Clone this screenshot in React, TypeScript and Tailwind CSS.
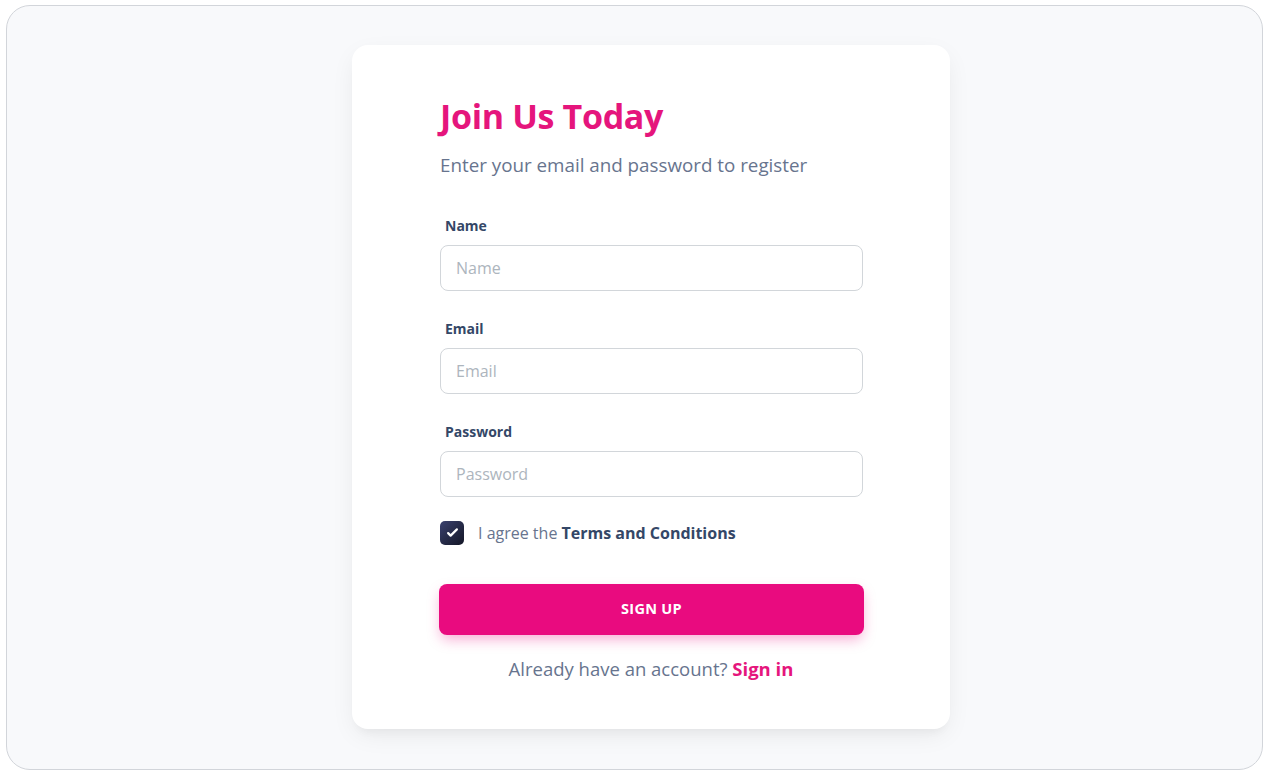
import React, { useState } from 'react';

export default function App() {
    const [agree, setAgree] = useState(true);

    return (
        <div className="min-h-screen w-full bg-white pl-[6px] pr-[8px] pt-[5px] font-['Open_Sans',sans-serif]">
            <div className="h-[765px] w-full rounded-[24px] border border-[#d2d5da] bg-[#f8f9fb] pl-[345px] pt-[39px]">
                {/* Card */}
                <div className="flex h-[684px] w-[598px] flex-col rounded-[16px] bg-white px-[88px] pt-[51px] shadow-[0_8px_26px_-4px_rgba(20,20,20,0.08),0_8px_9px_-5px_rgba(20,20,20,0.04)]">
                    <h1 className="text-[34px] font-bold leading-[1.2] tracking-[-0.01em] text-[#e5157c]">
                        Join Us Today
                    </h1>
                    <p className="mt-[15px] text-[18.8px] leading-[27px] text-[#67748e]">
                        Enter your email and password to register
                    </p>

                    <form className="mt-[37px] flex flex-col" onSubmit={(e) => e.preventDefault()}>
                        <label className="ml-[5px] text-[14px] font-bold leading-[20px] text-[#344767]">Name</label>
                        <input
                            type="text"
                            placeholder="Name"
                            className="mt-[9px] h-[46px] w-[423px] rounded-[8px] border border-[#d2d6da] bg-white px-[15px] text-[16px] text-[#495057] outline-none placeholder:text-[#adb5bd]"
                        />

                        <label className="ml-[5px] mt-[28px] text-[14px] font-bold leading-[20px] text-[#344767]">Email</label>
                        <input
                            type="email"
                            placeholder="Email"
                            className="mt-[9px] h-[46px] w-[423px] rounded-[8px] border border-[#d2d6da] bg-white px-[15px] text-[16px] text-[#495057] outline-none placeholder:text-[#adb5bd]"
                        />

                        <label className="ml-[5px] mt-[28px] text-[14px] font-bold leading-[20px] text-[#344767]">Password</label>
                        <input
                            type="password"
                            placeholder="Password"
                            className="mt-[9px] h-[46px] w-[423px] rounded-[8px] border border-[#d2d6da] bg-white px-[15px] text-[16px] text-[#495057] outline-none placeholder:text-[#adb5bd]"
                        />

                        {/* Terms */}
                        <label className="mt-[24px] flex cursor-pointer items-center gap-[14px]">
                            <span className="flex h-[24px] w-[24px] items-center justify-center rounded-[5px] bg-gradient-to-br from-[#3a416f] to-[#141727]">
                                {agree && (
                                    <svg className="h-[15px] w-[15px] text-white" fill="none" viewBox="0 0 24 24" stroke="currentColor">
                                        <path strokeLinecap="round" strokeLinejoin="round" strokeWidth={3.5} d="M5 13l4 4L19 7" />
                                    </svg>
                                )}
                            </span>
                            <input
                                type="checkbox"
                                className="hidden"
                                checked={agree}
                                onChange={(e) => setAgree(e.target.checked)}
                            />
                            <span className="text-[16px] leading-[24px] text-[#67748e]">
                                I agree the <span className="font-bold text-[#344767]">Terms and Conditions</span>
                            </span>
                        </label>

                        <button
                            type="submit"
                            className="mt-[39px] h-[51px] w-[425px] -ml-px rounded-[8px] bg-[#e90b7f] text-[14.5px] font-bold uppercase tracking-[0.02em] text-white shadow-[0_6px_14px_-2px_rgba(233,11,127,0.35)]"
                        >
                            Sign Up
                        </button>

                        <p className="mt-[20px] text-center text-[18.5px] leading-[27px] text-[#67748e]">
                            Already have an account? <a href="#" className="font-bold text-[#e5157c]">Sign in</a>
                        </p>
                    </form>
                </div>
            </div>
        </div>
    );
}
